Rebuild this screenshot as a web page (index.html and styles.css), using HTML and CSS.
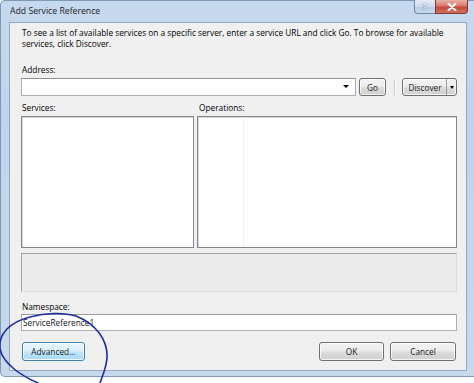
FILE: index.html
```html
<!DOCTYPE html>
<html>
<head>
<meta charset="utf-8">
<link rel="stylesheet" href="styles.css">
</head>
<body>
<div class="window">
  <div class="titlebar">
    <span class="title">Add Service Reference</span>
    <div class="caption-btns">
      <span class="cbtn help">?</span>
      <span class="cbtn close">
        <svg width="10" height="8" viewBox="0 0 10 8"><path d="M1.5 0.8 L8.5 7.2 M8.5 0.8 L1.5 7.2" stroke="#fff" stroke-width="2" stroke-linecap="round"/></svg>
      </span>
    </div>
  </div>
  <div class="client">
    <p class="intro">To see a list of available services on a specific server, enter a service URL and click Go. To browse for available services, click Discover.</p>
    <div class="label label-address">Address:</div>
    <div class="addr-row">
      <div class="combo"><span class="combo-arrow"></span></div>
      <div class="btn btn-go">Go</div>
      <div class="vsep"></div>
      <div class="btn split">
        <span class="split-main">Discover</span>
        <span class="split-arrow"><span class="tri"></span></span>
      </div>
    </div>
    <div class="list-labels">
      <div class="label col-services">Services:</div>
      <div class="label col-ops">Operations:</div>
    </div>
    <div class="lists">
      <div class="listbox services"></div>
      <div class="listbox ops"><div class="ops-col"></div></div>
    </div>
    <div class="status"></div>
    <div class="label label-ns">Namespace:</div>
    <div class="textbox">ServiceReference1</div>
    <div class="footer">
      <div class="btn btn-adv">Advanced...</div>
      <div class="spacer"></div>
      <div class="btn btn-ok">OK</div>
      <div class="btn btn-cancel">Cancel</div>
    </div>
  </div>
</div>
<svg class="annot" width="474" height="383" viewBox="0 0 474 383">
  <path d="M 38 383 C 22 376, 3 364, 0 349 C -2 334, 10 322, 30 317 C 45 313, 63 312, 76 316 C 96 324, 108 340, 107 358 C 106 369, 102 377, 100 383" fill="none" stroke="#1f2c9e" stroke-width="1.6" stroke-linecap="round"/>
</svg>
</body>
</html>
```

FILE: styles.css
```css
html, body {
  margin: 0;
  padding: 0;
  background: #ffffff;
}
body {
  width: 474px;
  height: 383px;
  overflow: hidden;
  position: relative;
  font-family: "Open Sans", "Liberation Sans", Arial, sans-serif;
  font-size: 8.3px;
  color: #000;
}
.window {
  width: 474px;
  box-sizing: border-box;
  background: linear-gradient(180deg, #c6d9ee 0%, #bfd4eb 30%, #c6d9ed 100%);
  border: 1px solid #7e98b8;
  border-right: none;
  border-radius: 5px 0 0 5px;
  padding: 0 0 5px 8px;
}
.titlebar {
  height: 21px;
  display: flex;
  align-items: flex-start;
  position: relative;
}
.title {
  font-size: 8.7px;
  line-height: 11px;
  margin: 5px 0 0 1px;
  color: #1e1e1e;
}
.caption-btns {
  margin-left: auto;
  margin-right: 6px;
  display: flex;
  margin-top: -1px;
}
.cbtn {
  height: 14px;
  display: flex;
  align-items: center;
  justify-content: center;
  box-sizing: border-box;
  border: 1px solid #6f87a8;
  border-top: none;
}
.help {
  width: 21px;
  border-right: none;
  border-radius: 0 0 0 4px;
  background: linear-gradient(180deg, #e4edf7 0%, #cbdbee 50%, #b6cbe4 51%, #c9d9ec 100%);
  color: #fff;
  font-weight: bold;
  font-size: 9px;
  line-height: 11px;
  text-shadow: 0 0 1px #4b6485, 0 0 1px #4b6485;
}
.close {
  width: 33px;
  border-color: #7b3b33;
  border-radius: 0 0 4px 0;
  background: linear-gradient(180deg, #eab0a6 0%, #d9786a 45%, #c44a38 55%, #d6705f 100%);
}
.close svg { display: block; }
.client {
  width: 458px;
  box-sizing: border-box;
  background: #f0f0f0;
  border: 1px solid #95a8c0;
  padding: 0 9px 9px 11px;
  display: flex;
  flex-direction: column;
}
.intro {
  margin: 4px 0 0 1px;
  line-height: 11px;
  width: 445px;
}
.label {
  line-height: 11px;
  padding-left: 1px;
}
.label-address { margin-top: 15px; }
.addr-row {
  margin-top: 3px;
  height: 18px;
  display: flex;
  align-items: stretch;
}
.combo {
  width: 335px;
  box-sizing: border-box;
  background: #fff;
  border: 1px solid #abadb3;
  border-top-color: #8d8f96;
  position: relative;
}
.combo-arrow {
  position: absolute;
  right: 6px;
  top: 6px;
  width: 0;
  height: 0;
  border-left: 3px solid transparent;
  border-right: 3px solid transparent;
  border-top: 3px solid #000;
}
.btn {
  box-sizing: border-box;
  border: 1px solid #707070;
  border-radius: 3px;
  background: linear-gradient(180deg, #f3f3f3 0%, #ebebeb 48%, #dddddd 52%, #d0d0d0 100%);
  box-shadow: inset 0 0 0 1px rgba(255,255,255,0.75);
  display: flex;
  align-items: center;
  justify-content: center;
  color: #1a1a1a;
  line-height: 11px;
}
.btn-go {
  width: 27px;
  margin-left: 3px;
}
.vsep {
  width: 1px;
  margin: 1px 7px 1px 8px;
  background: #c9c9c9;
  box-shadow: 1px 0 0 #fff;
}
.split {
  width: 55px;
  padding: 0;
  justify-content: flex-start;
}
.split-main {
  flex: 1;
  text-align: center;
  padding-left: 1px;
}
.split-arrow {
  width: 9px;
  align-self: stretch;
  border-left: 1px solid #9a9a9a;
  display: flex;
  align-items: center;
  justify-content: center;
}
.tri {
  width: 0;
  height: 0;
  border-left: 2.5px solid transparent;
  border-right: 2.5px solid transparent;
  border-top: 3px solid #000;
}
.list-labels {
  margin-top: 6px;
  display: flex;
}
.col-services { width: 175px; }
.col-ops { padding-left: 2px; }
.lists {
  margin-top: 3px;
  height: 132px;
  display: flex;
  gap: 3px;
}
.listbox {
  box-sizing: border-box;
  background: #fff;
  border: 1px solid #828790;
  box-shadow: inset 1px 1px 0 #d8d8d8;
}
.services { width: 173px; }
.ops {
  flex: 1;
  display: flex;
}
.ops-col {
  width: 45px;
  border-right: 1px solid #f2f2f2;
}
.status {
  margin-top: 5px;
  height: 39px;
  box-sizing: border-box;
  background: #ececec;
  border: 1px solid #a0a0a0;
  border-right-color: #dcdcdc;
  border-bottom-color: #dcdcdc;
}
.label-ns { margin-top: 9px; }
.textbox {
  margin-top: 2px;
  height: 17px;
  box-sizing: border-box;
  background: #fff;
  border: 1px solid #abadb3;
  border-top-color: #9a9ca3;
  padding-left: 1px;
  line-height: 15px;
  color: #111;
}
.footer {
  margin-top: 11px;
  height: 19px;
  display: flex;
}
.btn-adv {
  width: 63px;
  margin-left: 1px;
  border-color: #3c7fb1;
  background: linear-gradient(180deg, #eaf6fd 0%, #d9f0fc 48%, #bee6fd 52%, #a7d9f5 100%);
  box-shadow: inset 0 0 0 1px rgba(255,255,255,0.8);
}
.spacer { flex: 1; }
.btn-ok { width: 65px; }
.btn-cancel {
  width: 66px;
  margin-left: 6px;
  margin-right: 1px;
}
.annot {
  position: absolute;
  left: 0;
  top: 0;
  pointer-events: none;
}
```
